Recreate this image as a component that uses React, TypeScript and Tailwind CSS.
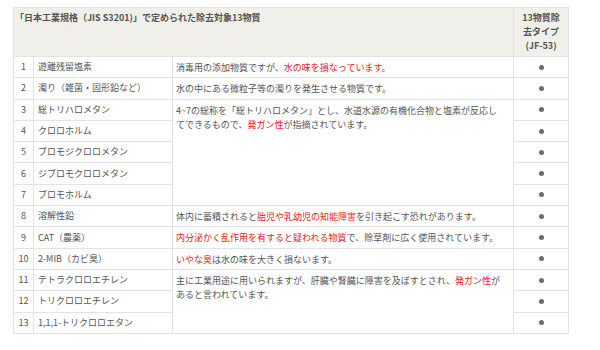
const rows: { n: string; name: string }[] = [
  { n: "1", name: "遊離残留塩素" },
  { n: "2", name: "濁り（雑菌・固形鉛など）" },
  { n: "3", name: "総トリハロメタン" },
  { n: "4", name: "クロロホルム" },
  { n: "5", name: "ブロモジクロロメタン" },
  { n: "6", name: "ジブロモクロロメタン" },
  { n: "7", name: "ブロモホルム" },
  { n: "8", name: "溶解性鉛" },
  { n: "9", name: "CAT（農薬）" },
  { n: "10", name: "2-MIB（カビ臭）" },
  { n: "11", name: "テトラクロロエチレン" },
  { n: "12", name: "トリクロロエチレン" },
  { n: "13", name: "1,1,1-トリクロロエタン" },
];

const Red = ({ children }: { children: React.ReactNode }) => (
  <span className="text-[#e8211b]">{children}</span>
);

function desc(i: number): React.ReactNode | null | undefined {
  switch (i) {
    case 0:
      return (
        <>
          消毒用の添加物質ですが、<Red>水の味を損なっています。</Red>
        </>
      );
    case 1:
      return <>水の中にある微粒子等の濁りを発生させる物質です。</>;
    case 2:
      return (
        <>
          4~7の総称を「総トリハロメタン」とし、水道水源の有機化合物と塩素が反応し
          <br />
          てできるもので、<Red>発ガン性</Red>が指摘されています。
        </>
      );
    case 7:
      return (
        <>
          体内に蓄積されると<Red>胎児や乳幼児の知能障害</Red>を引き起こす恐れがあります。
        </>
      );
    case 8:
      return (
        <>
          <Red>内分泌かく乱作用を有すると疑われる物質</Red>で、除草剤に広く使用されています。
        </>
      );
    case 9:
      return (
        <>
          <Red>いやな臭</Red>は水の味を大きく損ないます。
        </>
      );
    case 10:
      return (
        <>
          主に工業用途に用いられますが、肝臓や腎臓に障害を及ぼすとされ、<Red>発ガン性</Red>が
          <br />
          あると言われています。
        </>
      );
    default:
      return null;
  }
}

const span: Record<number, number> = { 2: 5, 10: 3 };

export default function App() {
  return (
    <div
      className="w-[600px] h-[350px] bg-white pt-[7px] pl-[13px] text-[#555]"
      style={{ fontFamily: '"Noto Sans CJK JP", "Liberation Sans", sans-serif' }}
    >
      <table className="table-fixed border-collapse w-[555px] text-[9px] leading-[14px]">
        <colgroup>
          <col className="w-[20px]" />
          <col className="w-[139px]" />
          <col className="w-[341px]" />
          <col className="w-[55px]" />
        </colgroup>
        <thead>
          <tr className="bg-[#f1efea]">
            <th
              colSpan={3}
              className="h-[49px] border border-[#e3e3e3] align-top text-left font-bold pt-[3px] pl-[1px]"
            >
              「日本工業規格（JIS S3201)」で定められた除去対象13物質
            </th>
            <th className="border border-[#e3e3e3] align-top text-center font-bold pt-[3px]">
              13物質除
              <br />
              去タイプ
              <br />
              (JF-53)
            </th>
          </tr>
        </thead>
        <tbody>
          {rows.map((r, i) => {
            const d = desc(i);
            return (
              <tr key={r.n} className="h-[21.3px]">
                <td className="border border-[#e3e3e3] text-center p-0">{r.n}</td>
                <td className="border border-[#e3e3e3] pl-[4px] whitespace-nowrap">{r.name}</td>
                {d !== null && (
                  <td
                    rowSpan={span[i] ?? 1}
                    className="border border-[#e3e3e3] pl-[3px] whitespace-nowrap align-top pt-[4px]"
                  >
                    {d}
                  </td>
                )}
                <td className="border border-[#e3e3e3] p-0">
                  <div className="mx-auto w-[5px] h-[5px] rounded-full bg-[#6b6b6b]" />
                </td>
              </tr>
            );
          })}
        </tbody>
      </table>
    </div>
  );
}
